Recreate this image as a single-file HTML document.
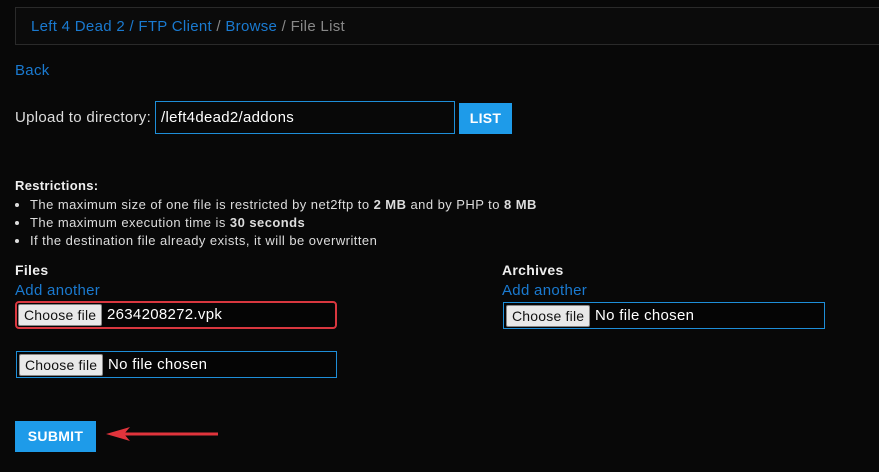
<!DOCTYPE html>
<html><head><style>
body{margin:0;width:879px;height:472px;background:#080808;font-family:"Liberation Sans",sans-serif;color:#eee;position:relative;overflow:hidden;letter-spacing:0.3px}
.a{position:absolute;white-space:nowrap}
.l{color:#1a7ad0}
.crumb{left:15px;top:7px;width:870px;height:36px;border:1px solid #2a2a2a;background:#0b0b0b}
.btn{background:#e9e9e9;border:1px solid #888;color:#111;font-size:14px;padding:2px 5px;border-radius:2px;letter-spacing:0.2px}
.fi{position:absolute;border:1px solid #1e8ed8;height:25px;background:#050505}
.fi .btn{position:absolute;left:2px;top:2px;height:16px;line-height:16px}
.fi span.t{position:absolute;left:91px;top:4px;font-size:15px;color:#fff}
li{margin:0;height:18px}
</style></head><body>
<div class="a crumb"></div>
<div class="a" style="left:31px;top:18px;font-size:15px;color:#888"><span class="l">Left 4 Dead 2</span> <span class="l">/</span> <span class="l">FTP Client</span> / <span class="l">Browse</span> / File List</div>
<div class="a l" style="left:15px;top:62px;font-size:15px">Back</div>
<div class="a" style="left:15px;top:109px;font-size:15px;color:#ddd">Upload to directory:</div>
<div class="a" style="left:155px;top:101px;width:298px;height:31px;border:1px solid #1e8ed8;"></div>
<div class="a" style="left:161px;top:109px;font-size:15px;color:#fff">/left4dead2/addons</div>
<div class="a" style="left:459px;top:103px;width:53px;height:31px;background:#1e9be9;color:#fff;font-weight:bold;font-size:14px;text-align:center;line-height:31px">LIST</div>
<div class="a" style="left:15px;top:178px;font-size:13px;font-weight:bold">Restrictions:</div>
<ul class="a" style="left:0;top:196px;margin:0;padding-left:30px;font-size:13px;line-height:18px;color:#ddd;letter-spacing:0.45px">
<li>The maximum size of one file is restricted by net2ftp to <b>2 MB</b> and by PHP to <b>8 MB</b></li>
<li>The maximum execution time is <b>30 seconds</b></li>
<li>If the destination file already exists, it will be overwritten</li>
</ul>
<div class="a" style="left:15px;top:262px;font-size:14px;font-weight:bold">Files</div>
<div class="a l" style="left:15px;top:282px;font-size:15px">Add another</div>
<div class="a" style="left:502px;top:262px;font-size:14px;font-weight:bold">Archives</div>
<div class="a l" style="left:502px;top:282px;font-size:15px">Add another</div>
<div class="fi" style="left:15px;top:301px;width:318px;border:2px solid #d9373f;border-radius:4px;height:24px"><span class="btn" style="left:1px;top:1px">Choose file</span><span class="t" style="left:90px;top:3px">2634208272.vpk</span></div>
<div class="fi" style="left:503px;top:302px;width:320px"><span class="btn">Choose file</span><span class="t">No file chosen</span></div>
<div class="fi" style="left:16px;top:351px;width:319px"><span class="btn">Choose file</span><span class="t">No file chosen</span></div>
<div class="a" style="left:15px;top:421px;width:81px;height:31px;background:#1e9be9;color:#fff;font-weight:bold;font-size:14px;text-align:center;line-height:31px">SUBMIT</div>
<svg class="a" style="left:104px;top:424px" width="118" height="20"><line x1="12" y1="10" x2="114" y2="10" stroke="#e0343c" stroke-width="3"/><polygon points="2,10 26,3 20,10 26,17" fill="#e0343c"/></svg>
</body></html>
